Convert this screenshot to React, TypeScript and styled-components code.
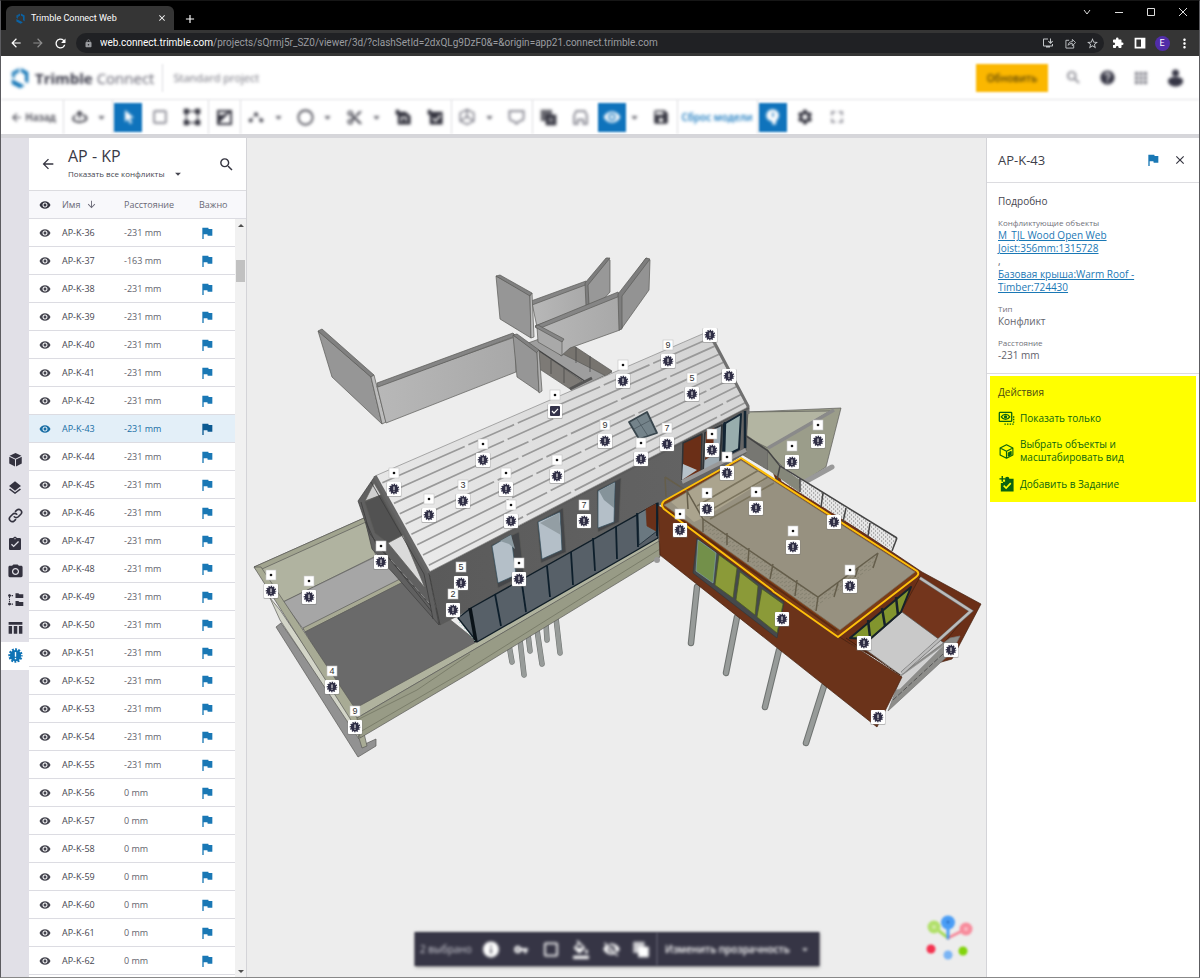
import React from "react";
import styled, { createGlobalStyle, css } from "styled-components";
import {
  MdVisibility, MdFlag, MdLayers, MdAssignmentTurnedIn, MdCameraAlt, MdSearch, MdArrowBack, MdArrowForward,
  MdRefresh, MdLock, MdClose, MdAdd, MdExtension, MdMoreVert, MdStarBorder, MdArrowDownward, MdArrowDropDown,
  MdHelp, MdApps, MdContentCut, MdSettings, MdFullscreen, MdFormatColorFill, MdVisibilityOff,
  MdInstallDesktop, MdOutlineCropSquare, MdOutlineCircle, MdSave, MdVpnKey, MdInfo,
} from "react-icons/md";

const Global = createGlobalStyle`
  * { box-sizing: border-box; }
  body { margin: 0; font-family: "Open Sans", "Noto Sans", sans-serif; color: #464650; background: #ececec; }
  button, select { font: inherit; color: inherit; background: none; border: 0; padding: 0; margin: 0; cursor: pointer; }
  svg { display: block; flex: none; }
`;

/* ---------- window frame ---------- */
const Window = styled.div`
  height: 100vh;
  display: flex;
  flex-direction: column;
  overflow: hidden;
  border: 1px solid #5c5c60;
  border-top-color: #161616;
  border-bottom-color: #888;
`;
const TabStrip = styled.div`
  height: 29px;
  flex: none;
  background: #000;
  color: #fff;
  display: flex;
  align-items: flex-end;
`;
const Tab = styled.div`
  width: 168px;
  height: 24px;
  margin-left: 5px;
  padding: 0 6px 0 9px;
  border-radius: 6px 6px 0 0;
  background: #353535;
  display: flex;
  align-items: center;
  gap: 5px;
  font: 400 9px/12px Roboto, sans-serif;
  & > span { flex: 1; white-space: nowrap; }
`;
const ChromeButton = styled.button<{ $w?: number }>`
  width: ${(p) => p.$w ?? 22}px;
  height: 22px;
  display: flex;
  align-items: center;
  justify-content: center;
`;
const NewTab = styled(ChromeButton)`
  margin-left: 5px;
`;
const WindowButtons = styled.div`
  margin-left: auto;
  align-self: flex-start;
  display: flex;
  color: #ddd;
`;
const AddressRow = styled.div`
  height: 26px;
  flex: none;
  background: #353535;
  color: #fff;
  display: flex;
  align-items: center;
  padding: 0 4px;
`;
const AddressBar = styled.div`
  flex: 1;
  min-width: 0;
  height: 20px;
  margin: 0 3px 0 5px;
  padding: 0 1px 0 8px;
  border-radius: 10px;
  background: #202124;
  color: #c4c7ca;
  display: flex;
  align-items: center;
  gap: 7px;
`;
const Url = styled.div`
  flex: 1;
  min-width: 0;
  overflow: hidden;
  white-space: nowrap;
  font: 400 10px/14px Roboto, sans-serif;
  color: #9a9ca0;
  & > span { color: #fff; }
`;
const Avatar = styled.span`
  width: 15px;
  height: 15px;
  border-radius: 50%;
  background: #512da8;
  color: #fff;
  font: 400 9px/15px Roboto, sans-serif;
  text-align: center;
`;

/* ---------- application header ---------- */
const Top = styled.header`
  flex: none;
  background: #fff;
  border-bottom: 4px solid #d6d6da;
  overflow: hidden;
`;
const Defocused = styled.div`
  filter: blur(1px);
  & svg, & span { filter: blur(1px); }
`;
const AppHeader = styled(Defocused)`
  height: 44px;
  display: flex;
  align-items: center;
  padding: 0 7px 0 8px;
  border-bottom: 1px solid #e0e0e4;
`;
const Brand = styled.div`
  display: flex;
  align-items: center;
  gap: 4px;
  padding-right: 8px;
  margin-right: 10px;
  border-right: 1px solid #dcdce0;
  font-size: 15px;
  line-height: 28px;
  color: #5d5c6a;
  & b { color: #353544; }
`;
const ProjectName = styled.span`
  font-size: 11px;
  color: #6d6d78;
`;
const UpdateButton = styled.button`
  width: 72px;
  height: 28px;
  margin-left: auto;
  margin-right: 8px;
  background: #fbb700;
  color: #5b4508;
  font-size: 10px;
  font-weight: 600;
`;
const HeaderButton = styled.button`
  width: 34px;
  height: 28px;
  display: flex;
  align-items: center;
  justify-content: center;
  color: #353544;
`;
const Toolbar = styled(Defocused)`
  height: 34px;
  display: flex;
  align-items: center;
  padding-left: 3px;
`;
const Group = styled.div<{ $last?: boolean }>`
  height: 34px;
  display: flex;
  align-items: center;
  gap: 4px;
  padding: 0 2px 0 1px;
  border-right: ${(p) => (p.$last ? "0" : "1px solid #dedee2")};
`;
const Pair = styled.div`
  display: flex;
  align-items: center;
`;
const Tool = styled.button<{ $on?: boolean; $soft?: boolean }>`
  width: 28px;
  height: 29px;
  display: flex;
  align-items: center;
  justify-content: center;
  background: ${(p) => (p.$on ? "#0f73bc" : "none")};
  color: ${(p) => (p.$on ? "#fff" : p.$soft ? "#7b7b86" : "#34343f")};
`;
const Caret = styled.button`
  width: 17px;
  height: 28px;
  display: flex;
  align-items: center;
  justify-content: center;
  color: #44444f;
`;
const TextTool = styled.button<{ $link?: boolean }>`
  display: flex;
  align-items: center;
  justify-content: center;
  width: ${(p) => (p.$link ? 76 : 56)}px;
  gap: 2px;
  font-size: 10px;
  font-weight: 600;
  white-space: nowrap;
  color: ${(p) => (p.$link ? "#0f73bc" : "#34343f")};
`;

/* ---------- body ---------- */
const Body = styled.div`
  flex: 1;
  min-height: 0;
  display: flex;
`;
const Rail = styled.nav`
  width: 28px;
  flex: none;
  background: #e1e0e7;
  display: flex;
  flex-direction: column;
  justify-content: center;
`;
const RailButton = styled.button<{ $on?: boolean }>`
  height: 28px;
  display: flex;
  align-items: center;
  justify-content: center;
  color: ${(p) => (p.$on ? "#0f73b5" : "#33323f")};
  background: ${(p) => (p.$on ? "#fff" : "none")};
`;
const Panel = styled.aside`
  width: 218px;
  flex: none;
  display: flex;
  flex-direction: column;
  background: #fff;
  border-right: 1px solid #d4d4d8;
`;
const PanelHead = styled.div`
  height: 53px;
  flex: none;
  display: flex;
  align-items: center;
  gap: 7px;
  padding: 0 9px 0 8px;
  border-bottom: 1px solid #dcdce0;
`;
const IconButton = styled.button<{ $w?: number }>`
  width: ${(p) => p.$w ?? 22}px;
  height: 22px;
  display: flex;
  align-items: center;
  justify-content: center;
  color: #353540;
`;
const Titles = styled.div`
  flex: 1;
  padding-left: 2px;
`;
const Title = styled.h1`
  margin: 0;
  font-size: 16px;
  line-height: 20px;
  font-weight: 500;
  color: #3a3a46;
`;
const Filter = styled.label`
  display: flex;
  align-items: center;
  color: #464650;
  & select {
    appearance: none;
    width: 103px;
    font-size: 8px;
    line-height: 16px;
  }
`;
const ListArea = styled.div`
  flex: 1;
  min-height: 0;
  display: flex;
  overflow: hidden;
`;
const Table = styled.table`
  flex: 1;
  align-self: flex-start;
  table-layout: fixed;
  border-collapse: separate;
  border-spacing: 0;
  font-size: 9px;
  line-height: 12px;
  & th, & td {
    height: 28px;
    padding: 0;
    text-align: left;
    border-bottom: 1px solid #dcdce2;
    white-space: nowrap;
  }
  & th { background: #f8f8fb; color: #6a6976; font-weight: 500; }
  & th > button { display: flex; align-items: center; gap: 6px; }
`;
const Row = styled.tr<{ $on?: boolean }>`
  background: ${(p) => (p.$on ? "#e3eff8" : "#fff")};
  color: ${(p) => (p.$on ? "#1a6ea5" : "#464650")};
  & td:nth-child(2) { font-weight: 500; }
  & td:nth-child(3) { color: ${(p) => (p.$on ? "#1a6ea5" : "#63636d")}; }
  & td:nth-child(4) button { color: ${(p) => (p.$on ? "#0c5a92" : "#1a78b5")}; }
`;
const Cell = styled.button`
  display: flex;
  align-items: center;
`;
const Eye = styled(Cell)`
  margin-left: 10px;
`;
const Col = styled.col<{ $w: number }>`
  width: ${(p) => p.$w}px;
`;
const Scroll = styled.div`
  width: 11px;
  flex: none;
  display: flex;
  flex-direction: column;
  align-items: center;
  background: #f1f1f1;
`;
const Corner = styled.div`
  align-self: stretch;
  height: 28px;
  background: #f8f8fb;
  border-bottom: 1px solid #dcdce2;
`;
const Arrow = styled.div<{ $down?: boolean }>`
  margin: ${(p) => (p.$down ? "auto 0 4px" : "5px 0 0")};
  border: 3px solid transparent;
  ${(p) => (p.$down ? css`border-top-color: #505050; border-bottom: 0;` : css`border-bottom-color: #505050; border-top: 0;`)}
`;
const Thumb = styled.div`
  width: 9px;
  height: 22px;
  margin-top: 33px;
  background: #c1c1c1;
`;

/* ---------- viewport ---------- */
const Viewport = styled.main`
  flex: 1;
  min-width: 0;
  position: relative;
  background: #ededed;
  & > svg { width: 100%; height: 100%; }
`;
const SelectionBar = styled(Defocused)`
  position: absolute;
  left: 50%;
  bottom: 11px;
  width: 405px;
  transform: translateX(-50%);
  height: 34px;
  display: flex;
  align-items: center;
  padding: 0 8px 0 6px;
  background: #363545;
  color: #fff;
  font-size: 10px;
  box-shadow: 0 1px 3px #777;
  white-space: nowrap;
`;
const Count = styled.span`
  width: 56px;
  color: #d0d0d8;
`;
const BarTool = styled.button`
  width: 30px;
  height: 28px;
  display: flex;
  align-items: center;
  justify-content: center;
`;
const Opacity = styled.button`
  display: flex;
  align-items: center;
  justify-content: space-between;
  flex: 1;
  height: 32px;
  padding-left: 8px;
  border-left: 1px solid #686878;
  font-weight: 600;
`;

/* ---------- details ---------- */
const Details = styled.aside`
  width: 213px;
  flex: none;
  background: #fff;
  border-left: 1px solid #d4d4d8;
`;
const DetailsHead = styled.div`
  height: 45px;
  display: flex;
  align-items: center;
  padding: 0 8px 0 11px;
  border-bottom: 1px solid #dcdce0;
  & h2 { flex: 1; margin: 0; font-size: 13px; line-height: 18px; font-weight: 500; color: #3f3f4a; }
`;
const FlagButton = styled(IconButton)`
  width: 32px;
  color: #1a78b5;
`;
const Section = styled.section`
  padding: 11px;
  border-bottom: 1px solid #dcdce0;
  font-size: 10px;
  line-height: 13px;
  & h3 { margin: 0 0 7px; font-size: 10px; line-height: 15px; font-weight: 500; color: #464650; }
  & dl, & dd { margin: 0; }
  & dt { font-size: 8px; line-height: 13px; color: #70707a; }
  & dd { color: #63636d; margin-bottom: 8px; }
  & dd:last-child { margin-bottom: 0; }
  & a { display: block; color: #1a78b5; font-weight: 500; text-decoration: underline; }
`;
const Actions = styled.section`
  margin: 2px 3px 0;
  padding: 8px;
  height: 126px;
  background: #ff0;
  font-size: 10px;
  line-height: 13px;
  color: #0a6410;
  & h3 { margin: 0 0 5px; font-size: 10px; line-height: 16px; font-weight: 500; color: #4b4b14; }
`;
const Action = styled.button<{ $tall?: boolean }>`
  display: flex;
  align-items: center;
  gap: 5px;
  width: 100%;
  height: ${(p) => (p.$tall ? 40 : 26)}px;
  text-align: left;
  font-weight: 500;
  & > span { width: 140px; }
`;

/* ---------- icons ---------- */
const Logo = ({ size, color = "#0b63a5" }: { size: number; color?: string }) => (
  <svg width={size} height={size} viewBox="0 0 24 24" fill={color}>
    <path d="M11 1 3 5.500v5l3.500 2V8.500L11 6z" opacity=".85" />
    <path d="M13 1v4.500l4.500 2.700v7.600l3.500 2V5.500z" />
    <path d="M3 13v5.500l9 4.700 5-2.700-4-2.300-6-3z" />
  </svg>
);
const CubeIcon = () => (
  <svg width="15" height="15" viewBox="0 0 24 24" fill="currentColor">
    <path d="M12 1.500 21.500 6 12 10.700 2.500 6z" /><path d="M2 7.500l9.200 4.500v11L2 18.200z" /><path d="M22 7.500 12.800 12v11l9.200-4.800z" />
  </svg>
);
const ChainIcon = () => (
  <svg width="15" height="15" viewBox="0 0 24 24" fill="none" stroke="currentColor" strokeWidth="2.600" strokeLinecap="round">
    <path d="M10 14a4.500 4.500 0 0 0 6.500 0l4-4a4.600 4.600 0 0 0-6.500-6.500L12 5.500" />
    <path d="M14 10a4.500 4.500 0 0 0-6.500 0l-4 4A4.600 4.600 0 0 0 10 20.500l2-2" />
  </svg>
);
const TreeIcon = () => (
  <svg width="17" height="17" viewBox="0 0 24 24" fill="currentColor">
    <path d="M12 3h4l1.500 1.500H23V10H12zM12 14h4l1.500 1.500H23V21H12z" />
    <path d="M3.500 5v14M3.500 6.500h5M3.500 18.500h5" stroke="currentColor" strokeWidth="1.500" strokeDasharray="2 1" fill="none" />
    <circle cx="3.500" cy="6.500" r="2" /><circle cx="3.500" cy="18.500" r="2" />
  </svg>
);
const ColumnsIcon = () => (
  <svg width="15" height="15" viewBox="0 0 24 24" fill="currentColor">
    <path d="M1 3h22v4.500H1zM1 9.500h5.500V22H1zM9.200 9.500h5.600V22H9.200zM17.500 9.500H23V22h-5.500z" />
  </svg>
);
const Burst = ({ dark = "currentColor" }: { dark?: string }) => (
  <g>
    <circle r="9" fill={dark} />
    <circle r="9.500" fill="none" stroke={dark} strokeWidth="4" pathLength={24} strokeDasharray="1.200 .8" strokeDashoffset=".6" />
    <path d="M0-5.500V2" stroke="#fff" strokeWidth="2.200" /><path d="M0 3.800v2.200" stroke="#fff" strokeWidth="2.200" />
  </g>
);
const ClashIcon = () => (
  <svg width="15" height="15" viewBox="-12 -12 24 24"><Burst /></svg>
);
const ShareIcon = () => (
  <svg width="11" height="11" viewBox="0 0 24 24" fill="none" stroke="currentColor" strokeWidth="2">
    <path d="M9 5H2v17h17v-7M7 16c0-6 4-8 9-8V3l7 7-7 7v-5c-4 0-7 1-9 4z" />
  </svg>
);
const SidePanelIcon = () => (
  <svg width="12" height="12" viewBox="0 0 24 24" fill="none" stroke="currentColor" strokeWidth="3.500">
    <path d="M3 3h18v18H3z" /><path d="M18 3v18" strokeWidth="8" />
  </svg>
);
const UserIcon = () => (
  <svg width="17" height="19" viewBox="0 0 17 19" fill="currentColor">
    <circle cx="8.500" cy="5" r="3.500" /><path d="M1 13c0-3 3-4 7.500-4s7.500 1 7.500 4c0 3-3 5.500-7.500 5.500S1 16 1 13z" />
  </svg>
);
const NodesIcon = () => (
  <svg width="18" height="18" viewBox="0 0 24 24" fill="currentColor">
    <path d="M1 1h7v7H1zM16 1h7v7h-7zM1 16h7v7H1zM16 16h7v7h-7z" />
    <path d="M4.500 4.500h15v15h-15z" fill="none" stroke="currentColor" strokeWidth="1.500" />
  </svg>
);
const MeasureIcon = () => (
  <svg width="16" height="16" viewBox="0 0 24 24" fill="currentColor" stroke="currentColor">
    <path d="M3 17 12 8l9 9" fill="none" strokeWidth="1.500" strokeDasharray="3 2" /><circle cx="4" cy="17" r="2.500" /><circle cx="12" cy="8" r="2.500" /><circle cx="20" cy="17" r="2.500" />
  </svg>
);
const OrbitIcon = () => (
  <svg width="17" height="17" viewBox="0 0 24 24" fill="none" stroke="currentColor" strokeWidth="2.500">
    <path d="M6 9c-9 8 4 10 9 9 10-2 8-8 2-9M12 13V5M8 8l4-4 4 4" />
  </svg>
);
const NoteIcon = () => (
  <svg width="17" height="17" viewBox="0 0 24 24" fill="currentColor">
    <path d="M1 1h5v3h9l7 6v12H4V8H1z" /><path d="M9 18v-6h7v6" stroke="#fff" strokeWidth="1.800" fill="none" />
  </svg>
);
const CheckNoteIcon = () => (
  <svg width="17" height="17" viewBox="0 0 24 24" fill="currentColor">
    <path d="M1 1h5v3h16v18H4V8H1z" /><path d="m8 13 4 4 7-8" stroke="#fff" strokeWidth="2.200" fill="none" />
  </svg>
);
const HexCubeIcon = () => (
  <svg width="18" height="18" viewBox="0 0 24 24" fill="none" stroke="currentColor" strokeWidth="2">
    <path d="m12 2 9 4.500v11L12 22l-9-4.500v-11zM12 2v9l8 6M12 11l-8 6" />
  </svg>
);
const BubbleIcon = () => (
  <svg width="17" height="17" viewBox="0 0 24 24" fill="none" stroke="currentColor" strokeWidth="2.400">
    <path d="M2 3h20v9c0 4-3 5-6 5l-4 4-4-4c-3 0-6-1-6-5z" />
  </svg>
);
const CopyIcon = () => (
  <svg width="17" height="17" viewBox="0 0 24 24" fill="currentColor">
    <path d="M1 1h16v16H1z" opacity=".75" /><path d="M8 8h15v15H8z" /><path d="M12 12h7v7h-7z" fill="#fff" opacity=".35" />
  </svg>
);
const BoxTopIcon = () => (
  <svg width="17" height="17" viewBox="0 0 24 24" fill="none" stroke="currentColor" strokeWidth="2.400">
    <path d="M3 21V9l3-6h12l3 6v12h-5v-6H8v6z" />
  </svg>
);
const PinIcon = () => (
  <svg width="18" height="18" viewBox="0 0 24 24" fill="currentColor">
    <path d="M3 10a8.500 8.500 0 0 1 17 0c0 4-3 6-4 8v4h-5v-4c-4-1-8-3-8-8z" /><path d="M12 6v6" stroke="#0f73bc" strokeWidth="2" />
  </svg>
);
const ShowOnlyIcon = () => (
  <svg width="17" height="15" viewBox="0 0 26 23" fill="none" stroke="currentColor" strokeWidth="2">
    <rect x="2" y="2" width="19" height="14" rx="1" />
    <path d="M5 9c3-5 10-5 13 0-3 5-10 5-13 0z" strokeWidth="1.800" /><circle cx="11.500" cy="9" r="1.500" fill="currentColor" />
    <path d="M24 8v12H9" strokeDasharray="2.200 1.800" />
  </svg>
);
const SelectObjectIcon = () => (
  <svg width="17" height="17" viewBox="0 0 24 24" fill="none" stroke="currentColor" strokeWidth="1.600" strokeLinejoin="round">
    <path d="M12 2.500 21 7v10l-9 4.500L3 17V7zM3 7l9 4.500L21 7M12 11.500v10" /><path d="M14.500 14l4-2v4.500l-4 2z" fill="currentColor" />
  </svg>
);
const AddTaskIcon = () => (
  <svg width="17" height="17" viewBox="0 0 24 24" fill="currentColor">
    <path d="M4 10V22h18V4h-6a3 3 0 0 0-6 0v4H7v2zM5 0v3H2v2h3v3h2V5h3V3H7V0z" />
    <path d="m8 13.500 3.500 3.500 6.500-7" fill="none" stroke="#ff0" strokeWidth="2.300" />
  </svg>
);

/* ---------- 3D scene ---------- */
type Pt = [number, number];
const pts = (list: Pt[]) => list.map((p) => p.join(",")).join(" ");
const mix = (a: Pt, b: Pt, t: number): Pt => [a[0] + (b[0] - a[0]) * t, a[1] + (b[1] - a[1]) * t];
const ridge: [Pt, Pt] = [[375, 476], [707, 332]];
const eave: [Pt, Pt] = [[429, 572], [748, 407]];

const Poly = ({ p, f, s = "#5a5a58", w = 0.7 }: { p: string; f: string; s?: string; w?: number }) => (
  <polygon points={p} fill={f} stroke={s} strokeWidth={w} strokeLinejoin="round" />
);

const RoofSeams = () => (
  <g stroke="#999" strokeWidth="1.700">
    {Array.from({ length: 9 }, (_, i) => {
      const t = (i + 0.75) / 9.3;
      const [x1, y1] = mix(ridge[0], eave[0], t);
      const [x2, y2] = mix(ridge[1], eave[1], t);
      return <line key={i} x1={x1 + 3} y1={y1 - 1} x2={x2} y2={y2} strokeDasharray={`${90 + ((i * 37) % 70)} 4 50 4`} />;
    })}
  </g>
);

const mullions: [number, number, number, number][] = [
  [495, 594, 501, 626], [522, 584, 526, 612], [547, 566, 550, 597], [571, 552, 573, 585],
  [593, 538, 595, 571], [616, 526, 617, 559], [637, 513, 638, 547], [657, 503, 657, 536],
];

const markers: [number, number, string][] = [
  [623, 381, "•"], [668, 361, "9"], [710, 335, ""], [729, 376, ""], [692, 394, "5"], [605, 441, "9"], [667, 444, "7"],
  [641, 459, "•"], [712, 450, "•"], [727, 473, "•"], [792, 462, "•"], [818, 441, "•"], [483, 460, "•"], [394, 489, "•"],
  [429, 515, "•"], [463, 501, "3"], [506, 489, "•"], [511, 521, "•"], [557, 476, "•"], [584, 521, "7"], [461, 583, "5"],
  [453, 610, "2"], [519, 579, "•"], [381, 562, "•"], [271, 591, "•"], [309, 597, "•"], [332, 687, "4"], [355, 727, "9"],
  [680, 530, "•"], [707, 509, "•"], [756, 508, "•"], [834, 522, ""], [793, 547, "•"], [850, 586, "•"], [782, 619, ""],
  [864, 643, ""], [951, 650, ""], [878, 717, ""], [555, 411, "✓"],
];

const Marker = ({ x, y, label }: { x: number; y: number; label: string }) => (
  <g transform={`translate(${x} ${y})`}>
    <rect x="-7.500" y="-7" width="15" height="15" rx="1" fill="#777" opacity=".45" />
    <rect x="-7" y="-7" width="14" height="14" rx="1" fill="#fff" />
    {label === "✓" ? (
      <g><rect x="-5" y="-5" width="10" height="10" rx="1" fill="#33324a" /><path d="m-3 0 2 2.200 4-4.400" fill="none" stroke="#fff" strokeWidth="1.200" /></g>
    ) : (
      <g transform="scale(.46)"><Burst dark="#2f2e45" /></g>
    )}
    {label && (
      <>
        <rect x="-5" y="-21" width="10" height="10" fill="#fff" stroke="#c4c4c4" strokeWidth=".6" />
        {/\d/.test(label)
          ? <text y="-12.800" textAnchor="middle" fontSize="9" fontFamily="Liberation Sans, sans-serif" fill="#333">{label}</text>
          : <circle cy="-16" r="1.300" fill="#111" />}
      </>
    )}
  </g>
);

const Scene = () => (
  <svg viewBox="247 138 739 839" role="img" aria-label="3D-модель">
    <defs>
      <pattern id="dots" width="4" height="4" patternUnits="userSpaceOnUse"><rect width="4" height="4" fill="#e6e6e6" /><path d="M1 1h1.200M3 3h1" stroke="#777" /></pattern>
      <pattern id="mesh" width="4" height="4" patternUnits="userSpaceOnUse"><path d="M0 3 3 1" stroke="#6b6758" strokeWidth=".4" /></pattern>
      <linearGradient id="wall" x1="0" x2="1"><stop stopColor="#b8b8b8" /><stop offset="1" stopColor="#a8a8a8" /></linearGradient>
      <linearGradient id="front" x1="0" x2="1"><stop stopColor="#5a5a5a" /><stop offset="1" stopColor="#656565" /></linearGradient>
      <linearGradient id="roof" x1="0" x2="1" y1="1" y2="0"><stop stopColor="#ececec" /><stop offset="1" stopColor="#d2d2d2" /></linearGradient>
    </defs>

    {/* retaining walls behind the house */}
    <Poly p="318,331 371,377 382,424 332,377" f="#969696" />
    <Poly p="318,331 322,329 374,375 371,377" f="#808080" />
    <Poly p="371,377 374,375 386,422 382,424" f="#bcbcbc" />
    <Poly p="377,386 515,337 516,372 386,423" f="url(#wall)" />
    <Poly p="377,383 513,333 516,336 378,387" f="#858585" />
    <Poly p="532,303 587,283 589,306 537,327" f="url(#wall)" />
    <Poly p="531,301 586,281 588,284 532,305" f="#858585" />
    <Poly p="587,283 607,258 610,260 610,292 601,302 588,305" f="#989898" />
    <Poly p="585,283 606,258 610,258 588,285 589,305 586,306" f="#7d7d7d" />
    <Poly p="496,276 530,295 531,338 500,319" f="#969696" />
    <Poly p="496,276 500,275 532,293 530,296" f="#808080" />
    <Poly p="530,296 532,293 534,337 531,338" f="#bcbcbc" />
    <Poly p="528,343 545,337 612,372 572,391" f="#9e9e9e" />
    <Poly p="562,338 612,371 606,376 563,354" f="#77746f" />
    <Poly p="535,326 619,295 620,330 570,348 561,356" f="url(#wall)" />
    <Poly p="535,326 618,292 620,296 538,329" f="#858585" />
    <Poly p="620,294 646,258 650,260 649,290 622,328" f="#939393" />
    <Poly p="618,294 646,258 650,259 622,296 622,329 619,330" f="#7d7d7d" />
    <Poly p="537,327 562,341 562,356 538,342" f="#a9a9a9" />
    <Poly p="535,327 538,325 564,339 562,342" f="#858585" />
    <Poly p="538,350 582,381 570,389 538,368" f="#7d7a76" />
    <path d="M538 350 586 382" stroke="#444" strokeWidth="1.400" />
    <path d="M551 360v14M564 368v15M576 347v16M590 356v16" stroke="#444" strokeWidth=".7" />
    <Poly p="513,335 537,352 539,392 517,377" f="#969696" />
    <Poly p="513,335 517,334 539,350 537,353" f="#808080" />
    <Poly p="537,352 539,350 542,391 539,393" f="#b0b0b0" />
    <path d="m570 389 22-11" stroke="#555" strokeWidth="3" />

    {/* courtyard to the right of the gable */}
    <Poly p="748,412 841,408 826,467 800,484 768,452 746,437" f="#9b9d8a" />
    <Poly p="748,412 830,411 768,448 746,437" f="#b3b5a2" />
    <path d="m768 448 66-38" stroke="#8a8a8a" strokeWidth="3.500" />
    <path d="m803 483 29-16" stroke="#999" strokeWidth="5" strokeLinecap="round" />
    <Poly p="746,435 768,450 768,470 743,455" f="#777772" />

    {/* columns */}
    <g stroke="#6f7371" strokeWidth="5.500" strokeLinecap="round">
      <path d="m509 645 3 17M520 640l4 35M528 634l2 17M537 630l5 34M546 624l1 16M556 618l4 35" />
      <path d="m697 587-6 56M737 617l-11 56M779 650l-14 57M824 686l-18 57" strokeWidth="6.500" />
    </g>
    <g stroke="#979b99" strokeWidth="4.400" strokeLinecap="round">
      <path d="m509 645 3 17M520 640l4 35M528 634l2 17M537 630l5 34M546 624l1 16M556 618l4 35M697 587l-6 56M737 617l-11 56M779 650l-14 57M824 686l-18 57" />
    </g>

    {/* terrace */}
    <Poly p="276,627 281,623 365,744 376,739 376,746 358,757" f="#929292" />
    <Poly p="254,567 364,518 376,556 283,602" f="#b0b3a0" />
    <Poly p="254,567 364,518 366,522 262,569" f="#a1a48f" />
    <Poly p="283,602 375,557 402,580 304,630" f="#a6a6a6" />
    <Poly p="303,628 400,579 404,582 305,632" f="#a8aa94" />
    <Poly p="305,632 403,582 478,642 352,712" f="#6a6a6a" />
    <Poly p="270,598 280,610 358,725 359,739 280,620" f="#d3d5c8" />
    <Poly p="254,567 261,567 360,716 367,746 362,748 356,728" f="#a8ab95" />
    <Poly p="352,710 478,641 658,537 659,542 470,652 357,718" f="#b0b39e" />
    <Poly p="357,718 470,652 659,541 660,557 470,673 360,738" f="#989b86" />
    <path d="M360 732 470 668 660 549M357 720l60-30 53-36" stroke="#6f715f" strokeWidth=".7" fill="none" />
    <circle cx="657" cy="560" r="3" fill="#999" />

    {/* house */}
    <Poly p="429,572 748,407 746,453 660,505 471,609 440,625" f="url(#front)" />
    <Poly p="375,476 358,501 366,524 372,549 439,625 429,573" f="#606060" s="#3d3d3d" />
    <Poly p="374,483 365,501 381,495" f="#cfcfcf" />
    <Poly p="365,502 381,495 403,536 388,543 375,533" f="#525252" />
    <Poly p="388,543 403,535 425,588" f="#dadada" />
    <path d="m375 476 54 97 11 52M371 482l53 92 9 45M361 502l9 32 62 78M366 522l10 22 55 62" stroke="#3c3c3c" strokeWidth=".8" fill="none" />
    <path d="m391 560 38 43" stroke="#8a8a8a" strokeWidth="1" strokeDasharray="6 3" />
    <Poly p={pts([ridge[0], ridge[1], eave[1], eave[0]])} f="url(#roof)" s="#888" />
    <RoofSeams />
    <path d="m375 476 54 97" stroke="#666" strokeWidth="3.500" />
    <path d="m712 338 36 68v8" stroke="#707070" strokeWidth="3" fill="none" />
    <path d="m429 574 320-166" stroke="#5b5b5b" strokeWidth="1.500" />
    <Poly p="629,422 647,412 657,433 639,439" f="#74838a" s="#39464d" w={1.8} />
    <path d="m637 419 11 17m-14-7 17-9" stroke="#46535a" strokeWidth=".7" />

    {/* facade glazing */}
    <Poly p="471,608 658,503 658,538 477,642 458,618" f="#576068" s="#101e28" w={1.4} />
    <Poly p="638,514 657,503 657,531 639,545" f="#6a7880" s="#101e28" />
    <Poly p="646,509 656,504 656,531 647,526" f="#693019" s="#693019" />
    <path d="m470 608 6 34" stroke="#0a1218" strokeWidth="3.500" />
    <g stroke="#0d1e2b" strokeWidth="1.800">
      {mullions.map(([x1, y1, x2, y2]) => <line key={x1} x1={x1} y1={y1} x2={x2} y2={y2} />)}
    </g>
    <path d="m459 622 16 19" stroke="#9cb" strokeDasharray="1 3" />
    <Poly p="491,545 519,532 524,575 498,588" f="#444649" />
    <Poly p="492,546 511,535 516,575 498,583" f="#b4bfc8" s="#35505f" />
    <Poly p="500,541 511,535 515,549 509,544" f="#8c9aa1" s="none" />
    <Poly p="537,522 563,508 566,552 541,563" f="#444649" />
    <Poly p="538,522 560,512 562,550 542,559" f="#b4bfc8" s="#35505f" />
    <Poly p="540,523 559,513 561,535" f="#939ea4" s="none" />
    <Poly p="597,490 621,478 619,522 598,532" f="#444649" />
    <Poly p="598,491 615,482 614,522 598,528" f="#b4bfc8" s="#35505f" />
    <Poly p="599,491 614,483 614,508 604,500" f="#85939a" s="none" />
    <Poly p="683,443 702,434 701,473 682,481" f="#6b2f17" s="#2f3438" w={1.5} />
    <Poly p="683,464 697,470 682,480" f="#b7c2ca" s="none" />
    <Poly p="705,433 722,425 720,463 703,472" f="#9eabb3" s="#2f3438" w={1.8} />
    <Poly p="706,432 714,428 713,455 705,460" f="#6b2f17" s="none" />
    <Poly p="724,424 741,414 739,449 723,457" f="#98adad" s="#142634" w={2} />
    <path d="m725 422-1 34m21-45v37" stroke="#142634" strokeWidth="2.500" />
    <path d="m682 482 64-32" stroke="#999" strokeWidth="4" />

    {/* timber extension */}
    <Poly p="773,472 922,572 981,604 952,659 902,673 838,637" f="#6b2f17" s="#43200f" />
    <Poly p="920,577 970,611 944,643 901,612" f="#73351c" s="#43200f" />
    <Poly p="902,612 944,643 902,676 862,647" f="#c9c9c9" />
    <Poly p="850,638 911,587 901,612 870,639" f="#82952e" s="#17222a" w={2} />
    <path d="m868 620 2 17M882 608l3 18M896 597l2 18" stroke="#17222a" strokeWidth="2.500" />
    <Poly p="902,674 950,638 960,636 952,652 888,711 896,690" f="#8d8d8a" s="#777" />
    <Poly p="901,676 944,645 900,689 896,690" f="#d2d2d2" s="#999" />
    <path d="m893 700 50-46" stroke="#555" strokeDasharray="5 2" />
    <Poly p="658,506 663,508 838,636 902,677 877,727 660,555" f="#6b331a" s="#43200f" />
    <path d="m846 638 54 37" stroke="#43200f" />
    <path d="m920 578 51 33-69 62" fill="none" stroke="#6a6a6a" strokeWidth="3.600" />
    <path d="m920 578 51 33-69 62" fill="none" stroke="#bcbcbc" strokeWidth="2.400" />
    <Poly p="697,538 784,602 777,638 693,573" f="#45494c" s="#34383b" />
    <Poly p="698,540 716,553 713,583 696,571" f="#73904a" s="#7da0a8" />
    <Poly p="719,555 737,568 733,598 715,585" f="#8b9a38" s="#4a5a20" />
    <Poly p="740,572 758,586 755,615 736,600" f="#8b9a38" s="#4a5a20" />
    <Poly p="762,589 783,604 777,633 757,617" f="#8b9a38" s="#4a5a20" />

    {/* selected roof slab */}
    <path d="M741 458 917 571q3 3-1 6l-78 60L664 509q-4-4 0-8z" fill="#7a3b16" />
    <Poly p="670,502 741,460 915,572 840,630 664,505" f="#979180" s="#7a7361" />
    <Poly p="671,502 741,461 768,478 707,516 694,522" f="#aba48e" s="none" />
    <path d="m697 506 62-36M702 515l66-38M710 519l64-36" stroke="#7b745e" strokeWidth="1.600" />
    <path d="m667 510 170 121" stroke="#5b2a12" strokeWidth="2" />
    <Poly p="703,519 818,597 816,611 703,529" f="url(#mesh)" s="none" />
    <Poly p="818,597 878,554 873,568 817,607" f="url(#mesh)" s="none" />
    <path d="m665 477 22 14 16 28 115 78 60-44M665 477l1 20M687 491l1 18M703 519v13M727 533v12M749 548l-1 14M773 564l-3 15M797 580l-2 16M818 597l-2 14M838 583l-4 14M858 568l-3 9M878 553l-5 15" fill="none" stroke="#655e4b" strokeWidth="1.500" />
    <Poly p="780,465 897,538 892,550 781,481" f="url(#dots)" s="none" />
    <Poly p="768,451 780,466 800,480 799,492 768,470" f="#85877a" s="none" />
    <path d="m746 436 22 15 12 15 117 72M780 466l-3 14M800 479v13M823 493l-2 14M846 508l-3 14M870 523l-2 13M897 538l-5 13" fill="none" stroke="#444" strokeWidth="1.500" />
    <path d="M741 458 917 571q3 3-1 6l-78 60-61-43-3-2-2-2L664 509q-4-4 0-8z" fill="none" stroke="#fdc00b" strokeWidth="2" strokeLinejoin="round" />

    {markers.map(([x, y, label]) => <Marker key={`${x}-${y}`} x={x} y={y} label={label} />)}

    {/* axis gizmo */}
    <g filter="blur(1px)" strokeLinecap="round">
      <path d="m948 938-14-11" stroke="#a8dc5c" strokeWidth="3" /><path d="m948 938 18-9" stroke="#f58a9b" strokeWidth="3" /><path d="M948 938v-15" stroke="#4a9df5" strokeWidth="3" />
      <circle cx="934" cy="927" r="6.500" fill="#b2e06c" /><circle cx="966" cy="929" r="6.500" fill="#f78d9d" /><circle cx="948" cy="922.500" r="7" fill="#4a9df5" />
      <circle cx="934" cy="927" r="2" fill="#cfeaa0" /><circle cx="966" cy="929" r="2" fill="#fbb9c3" /><circle cx="948" cy="922" r="1.500" fill="#2b6fc4" />
      <circle cx="931" cy="949" r="4.500" fill="#f43350" /><circle cx="948" cy="955" r="4.500" fill="#7ab4f4" /><circle cx="963" cy="951" r="4.500" fill="#82d30c" />
    </g>
  </svg>
);

/* ---------- data ---------- */
const clashes = Array.from({ length: 27 }, (_, i) => {
  const n = 36 + i;
  return { name: `AP-K-${n}`, distance: n === 37 ? "-163 mm" : n > 55 ? "0 mm" : "-231 mm", selected: n === 43 };
});
const railItems: [string, React.ReactNode][] = [
  ["Модели", <CubeIcon />], ["Слои", <MdLayers size={16} />], ["Связи", <ChainIcon />], ["Задания", <MdAssignmentTurnedIn size={16} />],
  ["Виды", <MdCameraAlt size={17} />], ["Структура", <TreeIcon />], ["Таблица", <ColumnsIcon />], ["Конфликты", <ClashIcon />],
];
const Drop = () => <Caret aria-label="Ещё"><MdArrowDropDown size={15} /></Caret>;

export default function App() {
  return (
    <Window>
      <Global />
      <TabStrip>
        <Tab>
          <Logo size={11} />
          <span>Trimble Connect Web</span>
          <ChromeButton $w={12} aria-label="Закрыть вкладку"><MdClose size={10} /></ChromeButton>
        </Tab>
        <NewTab aria-label="Новая вкладка"><MdAdd size={14} /></NewTab>
        <WindowButtons>
          <ChromeButton $w={32} aria-label="Поиск вкладок"><svg width="8" height="8" viewBox="0 0 8 8" fill="none" stroke="currentColor"><path d="m1 2 3 4 3-4" /></svg></ChromeButton>
          <ChromeButton $w={32} aria-label="Свернуть"><svg width="8" height="8" viewBox="0 0 8 8" stroke="currentColor"><path d="M0 4.500h8" /></svg></ChromeButton>
          <ChromeButton $w={32} aria-label="Развернуть"><svg width="8" height="8" viewBox="0 0 8 8" fill="none" stroke="currentColor"><path d="M.5.5h7v7h-7z" /></svg></ChromeButton>
          <ChromeButton $w={32} aria-label="Закрыть"><svg width="8" height="8" viewBox="0 0 8 8" stroke="currentColor"><path d="m0 0 8 8M8 0 0 8" /></svg></ChromeButton>
        </WindowButtons>
      </TabStrip>
      <AddressRow>
        <ChromeButton aria-label="Назад"><MdArrowBack size={14} /></ChromeButton>
        <ChromeButton aria-label="Вперёд"><MdArrowForward size={14} color="#8d8d8d" /></ChromeButton>
        <ChromeButton aria-label="Обновить страницу"><MdRefresh size={15} /></ChromeButton>
        <AddressBar>
          <MdLock size={9} color="#9a9ca0" />
          <Url role="textbox" aria-label="Адрес"><span>web.connect.trimble.com</span>/projects/sQrmj5r_SZ0/viewer/3d/?clashSetId=2dxQLg9DzF0&amp;=&amp;origin=app21.connect.trimble.com</Url>
          <Pair>
            <ChromeButton aria-label="Установить"><MdInstallDesktop size={12} /></ChromeButton>
            <ChromeButton aria-label="Поделиться"><ShareIcon /></ChromeButton>
            <ChromeButton aria-label="Закладка"><MdStarBorder size={13} /></ChromeButton>
          </Pair>
        </AddressBar>
        <ChromeButton aria-label="Расширения"><MdExtension size={12} /></ChromeButton>
        <ChromeButton aria-label="Боковая панель"><SidePanelIcon /></ChromeButton>
        <ChromeButton aria-label="Профиль"><Avatar>E</Avatar></ChromeButton>
        <ChromeButton aria-label="Меню"><MdMoreVert size={15} /></ChromeButton>
      </AddressRow>

      <Top>
        <AppHeader>
          <Brand><Logo size={22} color="#0f73b5" /><span><b>Trimble</b> Connect</span></Brand>
          <ProjectName>Standard project</ProjectName>
          <UpdateButton><span>Обновить</span></UpdateButton>
          <HeaderButton aria-label="Поиск"><MdSearch size={17} color="#6a6a75" /></HeaderButton>
          <HeaderButton aria-label="Справка"><MdHelp size={17} /></HeaderButton>
          <HeaderButton aria-label="Приложения"><MdApps size={18} color="#6a6a75" /></HeaderButton>
          <HeaderButton aria-label="Профиль"><UserIcon /></HeaderButton>
        </AppHeader>
        <Toolbar>
          <Group><TextTool><MdArrowBack size={13} /><span>Назад</span></TextTool></Group>
          <Group><Pair><Tool aria-label="Орбита"><OrbitIcon /></Tool><Drop /></Pair></Group>
          <Group>
            <Tool $on aria-label="Выбор"><svg width="16" height="16" viewBox="0 0 16 16" fill="#fff"><path d="M5 1v12l3-3 2 5 2-1-2-5h4z" /></svg></Tool>
            <Tool $soft aria-label="Рамка"><MdOutlineCropSquare size={20} /></Tool>
            <Tool aria-label="Узлы"><NodesIcon /></Tool>
          </Group>
          <Group><Tool aria-label="Сравнить"><svg width="15" height="15" viewBox="0 0 15 15" fill="none" stroke="currentColor" strokeWidth="2"><path d="M1 1h13v13H1z" /><path d="M1 14V6h5l8-5" fill="currentColor" /></svg></Tool></Group>
          <Group>
            <Pair><Tool aria-label="Измерить"><MeasureIcon /></Tool><Drop /></Pair>
            <Pair><Tool aria-label="Разметка"><MdOutlineCircle size={19} /></Tool><Drop /></Pair>
            <Pair><Tool aria-label="Сечение"><MdContentCut size={17} /></Tool><Drop /></Pair>
            <Tool aria-label="Заметка"><NoteIcon /></Tool>
            <Tool aria-label="Проверка"><CheckNoteIcon /></Tool>
          </Group>
          <Group>
            <Pair><Tool $soft aria-label="Вид"><HexCubeIcon /></Tool><Drop /></Pair>
            <Tool $soft aria-label="Комментарий"><BubbleIcon /></Tool>
          </Group>
          <Group>
            <Tool aria-label="Копия"><CopyIcon /></Tool>
            <Tool $soft aria-label="Объём"><BoxTopIcon /></Tool>
            <Pair><Tool $on aria-label="Видимость"><MdVisibility size={18} /></Tool><Drop /></Pair>
            <Tool aria-label="Сохранить"><MdSave size={18} /></Tool>
          </Group>
          <Group><TextTool $link><span>Сброс модели</span></TextTool></Group>
          <Group $last>
            <Tool $on aria-label="Метки"><PinIcon /></Tool>
            <Tool aria-label="Настройки"><MdSettings size={18} /></Tool>
            <Tool $soft aria-label="Во весь экран"><MdFullscreen size={20} /></Tool>
          </Group>
        </Toolbar>
      </Top>

      <Body>
        <Rail>
          {railItems.map(([label, icon]) => <RailButton key={label} aria-label={label} $on={label === "Конфликты"}>{icon}</RailButton>)}
        </Rail>
        <Panel>
          <PanelHead>
            <IconButton aria-label="Назад"><MdArrowBack size={16} /></IconButton>
            <Titles>
              <Title>AP - KP</Title>
              <Filter>
                <select aria-label="Фильтр конфликтов"><option>Показать все конфликты</option></select>
                <MdArrowDropDown size={14} />
              </Filter>
            </Titles>
            <IconButton aria-label="Поиск"><MdSearch size={17} /></IconButton>
          </PanelHead>
          <ListArea>
            <Table>
              <colgroup><Col $w={33} /><Col $w={62} /><Col $w={75} /><Col $w={36} /></colgroup>
              <thead>
                <tr>
                  <th><Eye as="span"><MdVisibility size={12} color="#353540" /></Eye></th>
                  <th><button>Имя <MdArrowDownward size={11} /></button></th>
                  <th>Расстояние</th>
                  <th>Важно</th>
                </tr>
              </thead>
              <tbody>
                {clashes.map((c) => (
                  <Row key={c.name} $on={c.selected}>
                    <td><Eye aria-label={`Видимость ${c.name}`}><MdVisibility size={12} /></Eye></td>
                    <td>{c.name}</td>
                    <td>{c.distance}</td>
                    <td><Cell aria-label={`Важно ${c.name}`}><MdFlag size={16} /></Cell></td>
                  </Row>
                ))}
              </tbody>
            </Table>
            <Scroll><Corner /><Arrow /><Thumb /><Arrow $down /></Scroll>
          </ListArea>
        </Panel>
        <Viewport>
          <Scene />
          <SelectionBar>
            <Count>2 выбрано</Count>
            <BarTool aria-label="Сведения"><MdInfo size={19} /></BarTool>
            <BarTool aria-label="Свойства"><MdVpnKey size={15} /></BarTool>
            <BarTool aria-label="Рамка"><MdOutlineCropSquare size={21} /></BarTool>
            <BarTool aria-label="Цвет"><MdFormatColorFill size={19} /></BarTool>
            <BarTool aria-label="Скрыть"><MdVisibilityOff size={18} /></BarTool>
            <BarTool aria-label="Копия"><CopyIcon /></BarTool>
            <Opacity><span>Изменить прозрачность</span><MdArrowDropDown size={13} /></Opacity>
          </SelectionBar>
        </Viewport>
        <Details>
          <DetailsHead>
            <h2>AP-K-43</h2>
            <FlagButton aria-label="Важно"><MdFlag size={16} /></FlagButton>
            <IconButton aria-label="Закрыть"><MdClose size={14} /></IconButton>
          </DetailsHead>
          <Section>
            <h3>Подробно</h3>
            <dl>
              <dt>Конфликтующие объекты</dt>
              <dd>
                <a href="#joist">M_TJL Wood Open Web Joist:356mm:1315728</a>,
                <a href="#roof">Базовая крыша:Warm Roof - Timber:724430</a>
              </dd>
              <dt>Тип</dt>
              <dd>Конфликт</dd>
              <dt>Расстояние</dt>
              <dd>-231 mm</dd>
            </dl>
          </Section>
          <Actions>
            <h3>Действия</h3>
            <Action><ShowOnlyIcon /><span>Показать только</span></Action>
            <Action $tall><SelectObjectIcon /><span>Выбрать объекты и масштабировать вид</span></Action>
            <Action><AddTaskIcon /><span>Добавить в Задание</span></Action>
          </Actions>
        </Details>
      </Body>
    </Window>
  );
}
